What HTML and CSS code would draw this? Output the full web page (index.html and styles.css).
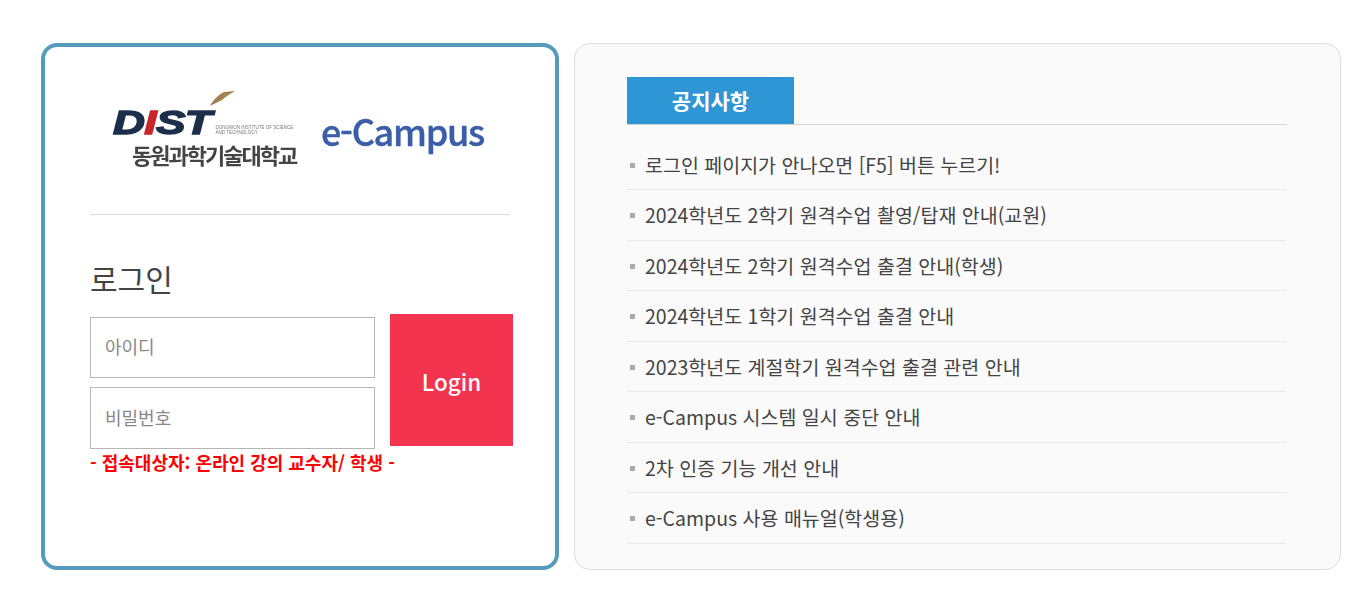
FILE: index.html
```html
<!DOCTYPE html>
<html lang="ko">
<head>
    <meta charset="UTF-8">
    <meta name="viewport" content="width=device-width, initial-scale=1.0">
    <title>e-Campus</title>
    <link rel="stylesheet" href="styles.css">
</head>
<body>
    <div class="wrap">
        <!-- Login -->
        <div class="login-box">
            <div class="logo">
                <div class="dist">
                    <svg class="wing" width="25" height="15" viewBox="0 0 25 15"><path d="M0 15 C3 9 8 4 14 1 L25 0 C20 3 15 6 12 9 C8 11 4 13 0 15Z" fill="#a5814f"/></svg>
                    <div class="dist-top">
                        <span class="dist-name">D<em>I</em>ST</span>
                        <span class="dist-en">DONGWON INSTITUTE OF SCIENCE<br>AND TECHNOLOGY</span>
                    </div>
                    <div class="dist-kr">동원과학기술대학교</div>
                </div>
                <div class="ecampus">e-Campus</div>
            </div>

            <h2 class="login-title">로그인</h2>
            <form class="login-form" onsubmit="return false">
                <div class="inputs">
                    <input type="text" placeholder="아이디">
                    <input type="password" placeholder="비밀번호">
                </div>
                <button class="login-button">Login</button>
            </form>
            <p class="login-note">- 접속대상자: 온라인 강의 교수자/ 학생 -</p>
        </div>

        <!-- Notice -->
        <div class="notice-box">
            <div class="notice-head"><span class="notice-tab">공지사항</span></div>
            <ul class="notice-list">
                <li>로그인 페이지가 안나오면 [F5] 버튼 누르기!</li>
                <li>2024학년도 2학기 원격수업 촬영/탑재 안내(교원)</li>
                <li>2024학년도 2학기 원격수업 출결 안내(학생)</li>
                <li>2024학년도 1학기 원격수업 출결 안내</li>
                <li>2023학년도 계절학기 원격수업 출결 관련 안내</li>
                <li>e-Campus 시스템 일시 중단 안내</li>
                <li>2차 인증 기능 개선 안내</li>
                <li>e-Campus 사용 매뉴얼(학생용)</li>
            </ul>
        </div>
    </div>
</body>
</html>
```

FILE: styles.css
```css
* {
    box-sizing: border-box;
}

body {
    background-color: white;
    font-family: "Noto Sans CJK KR", "Noto Sans", sans-serif;
    color: #444;
    margin: 0;
    padding: 0;
    overflow: hidden;
}

.wrap {
    display: flex;
    gap: 15px;
    padding: 43px 0 0 41px;
}

.login-box {
    width: 518px;
    height: 527px;
    padding: 0 45px;
    border: 4px solid #559bbd;
    border-radius: 16px;
}

.logo {
    height: 168px;
    padding: 39px 0 0 23px;
    display: flex;
    align-items: flex-start;
    border-bottom: 1px solid #ddd;
}

.dist {
    position: relative;
    width: 184px;
    padding-top: 21px;
    filter: blur(0.5px);
}

.wing {
    position: absolute;
    top: 5px;
    left: 97px;
}

.dist-top {
    display: flex;
    align-items: flex-end;
    height: 30px;
}

.dist-name {
    font-family: "Liberation Sans", sans-serif;
    font-size: 34px;
    line-height: 30px;
    font-weight: bold;
    font-style: italic;
    letter-spacing: -0.5px;
    color: #1b2f4b;
    transform: scaleX(1.3);
    transform-origin: left;
    -webkit-text-stroke: 1.5px #1b2f4b;
}

.dist-name em {
    color: #c9252d;
    -webkit-text-stroke: 1.5px #c9252d;
}

.dist-en {
    margin: 0 0 2px 27px;
    font-family: "Liberation Sans", sans-serif;
    font-size: 4.5px;
    line-height: 5px;
    color: #777;
    white-space: nowrap;
}

.dist-kr {
    margin: 4px 0 0 19px;
    font-size: 22px;
    line-height: 26px;
    font-weight: bold;
    letter-spacing: -2px;
    color: #444;
    white-space: nowrap;
}

.ecampus {
    margin: 24px 0 0 24px;
    font-size: 36px;
    line-height: 40px;
    font-weight: 500;
    letter-spacing: -1.3px;
    color: #3a5ea8;
    -webkit-text-stroke: 0.4px #3a5ea8;
    filter: blur(0.4px);
}

.login-title {
    margin: 41px 0 0;
    font-size: 30px;
    line-height: 44px;
    font-weight: 400;
    color: #444;
}

.login-form {
    display: flex;
    gap: 15px;
    align-items: flex-start;
    width: 430px;
    margin-top: 14px;
}

.inputs {
    width: 285px;
    padding-top: 3px;
    display: flex;
    flex-direction: column;
    gap: 9px;
}

.inputs input {
    display: block;
    width: 100%;
    height: 61px;
    padding: 0 14px 4px;
    border: 1px solid #b5b5b5;
    border-radius: 0;
    outline: none;
    background: white;
    font-family: inherit;
    font-size: 18px;
}

.inputs input + input {
    height: 62px;
    padding-bottom: 2px;
}

.inputs input::placeholder {
    color: #888;
    opacity: 1;
}

.login-button {
    width: 123px;
    height: 132px;
    border: none;
    padding: 2px 0 0;
    background-color: #f2344e;
    color: white;
    font-family: inherit;
    font-size: 22.4px;
    font-weight: 500;
    cursor: pointer;
}

.login-note {
    margin: 1px 0 0;
    font-size: 18px;
    line-height: 24px;
    font-weight: bold;
    color: #f00;
    white-space: nowrap;
}

.notice-box {
    width: 767px;
    height: 527px;
    padding: 33px 53px 0 52px;
    background-color: #fafafa;
    border: 1px solid #ddd;
    border-radius: 16px;
}

.notice-head {
    height: 48px;
    border-bottom: 1px solid #d3d3d3;
}

.notice-tab {
    display: block;
    width: 167px;
    height: 47px;
    background-color: #2e96d4;
    color: white;
    font-size: 21px;
    font-weight: bold;
    line-height: 47px;
    text-align: center;
}

.notice-list {
    list-style: none;
    margin: 14.5px 0 0;
    padding: 0;
}

.notice-list li {
    position: relative;
    height: 50.5px;
    padding-left: 18px;
    border-bottom: 1px solid #e9e9e9;
    font-size: 19.5px;
    line-height: 50px;
    color: #444;
    white-space: nowrap;
}

.notice-list li::before {
    content: "";
    position: absolute;
    left: 3px;
    top: 23px;
    width: 5px;
    height: 5px;
    background-color: #aaa;
}
```
